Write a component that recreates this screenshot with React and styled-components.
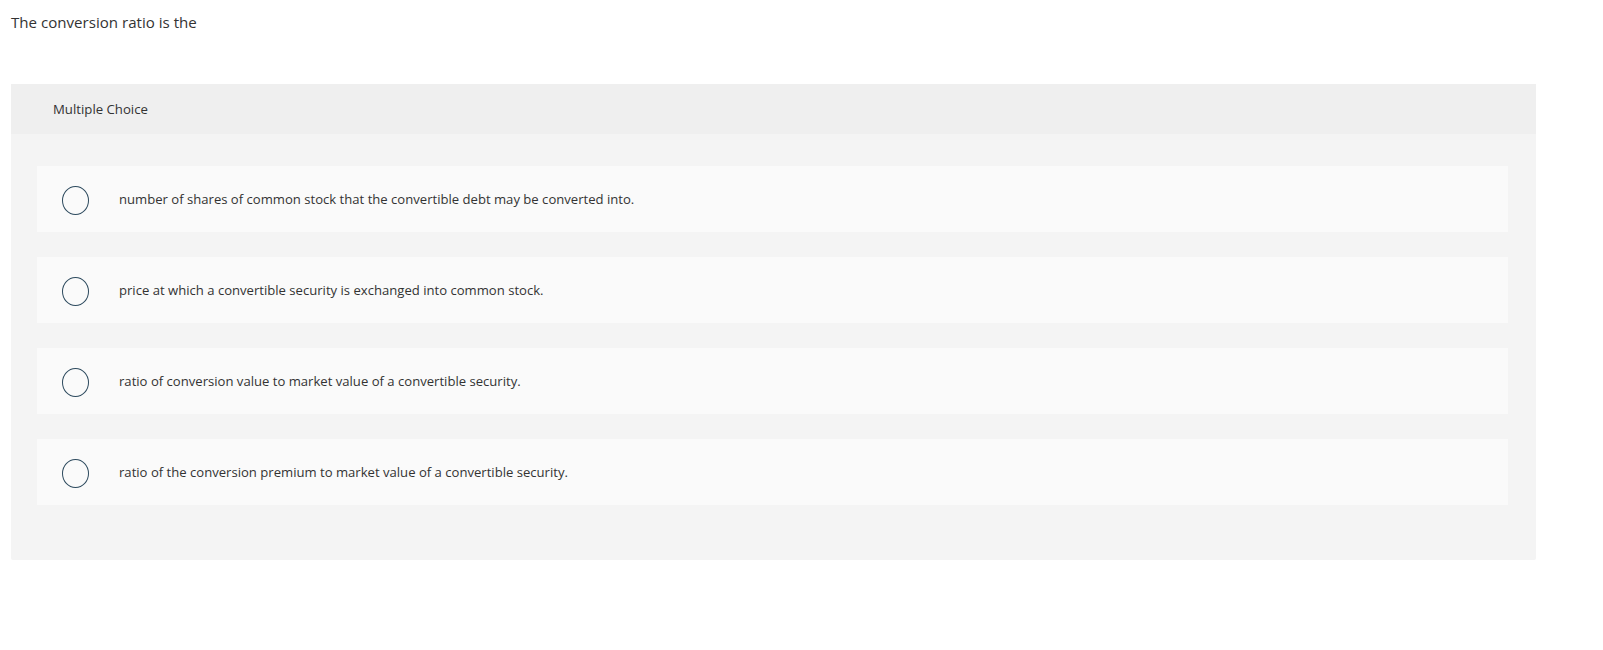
import React from 'react'
import styled, {createGlobalStyle} from 'styled-components'

const GlobalStyle = createGlobalStyle`
  html, body {
    margin: 0;
    padding: 0;
    background: #fff;
  }
  body {
    font-family: 'Open Sans', 'Liberation Sans', sans-serif;
    color: #333;
  }
`

const Page = styled.div`
  padding: 12px 11px 0 11px;
  width: 1525px;
`

const Prompt = styled.p`
  margin: 0;
  font-size: 15.1px;
  line-height: 20px;
  color: #333;
`

const Panel = styled.section`
  margin-top: 52px;
  background: #f4f4f4;
  border-radius: 2px;
`

const PanelHeader = styled.div`
  height: 50px;
  display: flex;
  align-items: center;
  padding-left: 42px;
  background: #efefef;
  font-size: 13.2px;
  color: #333;
`

const Choices = styled.ul`
  list-style: none;
  margin: 0;
  padding: 32px 28px 55px 26px;
  display: flex;
  flex-direction: column;
  gap: 25px;
`

const Choice = styled.li`
  height: 66px;
  display: flex;
  align-items: center;
  background: #fafafa;
  padding-left: 25px;
  font-size: 13.1px;
  color: #333;
`

const Radio = styled.span`
  width: 25px;
  height: 27px;
  border: 1.5px solid #2d4a5e;
  border-radius: 50%;
  flex: none;
  margin-right: 30px;
  margin-top: 3px;
`

const choices = [
  'number of shares of common stock that the convertible debt may be converted into.',
  'price at which a convertible security is exchanged into common stock.',
  'ratio of conversion value to market value of a convertible security.',
  'ratio of the conversion premium to market value of a convertible security.'
]

export default function App () {
  return (
    <Page>
      <GlobalStyle />
      <Prompt>The conversion ratio is the</Prompt>
      <Panel>
        <PanelHeader>Multiple Choice</PanelHeader>
        <Choices>
          {choices.map((text) => (
            <Choice key={text}>
              <Radio />
              {text}
            </Choice>
          ))}
        </Choices>
      </Panel>
    </Page>
  )
}
